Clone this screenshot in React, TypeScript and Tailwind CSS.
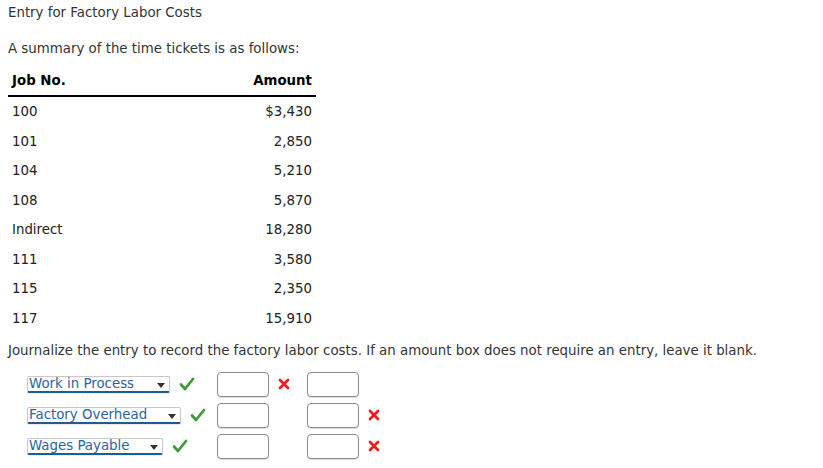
import React from 'react'

const ROWS = [
  { job: '100', amount: '$3,430' },
  { job: '101', amount: '2,850' },
  { job: '104', amount: '5,210' },
  { job: '108', amount: '5,870' },
  { job: 'Indirect', amount: '18,280' },
  { job: '111', amount: '3,580' },
  { job: '115', amount: '2,350' },
  { job: '117', amount: '15,910' },
]

const ENTRIES = [
  { account: 'Work in Process', selW: 'w-[143px]', debitX: true, creditX: false },
  { account: 'Factory Overhead', selW: 'w-[154px]', debitX: false, creditX: true },
  { account: 'Wages Payable', selW: 'w-[136px]', debitX: false, creditX: true },
]

function Check() {
  return (
    <svg width="16" height="16" viewBox="0 0 16 16" className="shrink-0">
      <path d="M2 8.5 L6 13 L14 3" fill="none" stroke="#3f9a3a" strokeWidth="2.8" strokeLinecap="round" strokeLinejoin="round" />
    </svg>
  )
}

function Cross() {
  return (
    <svg width="12" height="12" viewBox="0 0 12 12" className="shrink-0">
      <path d="M2 2 L10 10 M10 2 L2 10" stroke="#ee1c1c" strokeWidth="2.8" strokeLinecap="round" />
    </svg>
  )
}

function AccountSelect({ label, width }: { label: string; width: string }) {
  return (
    <div className={`relative flex items-center h-[17px] ${width} border border-[#c8c8c8] rounded-[2px] border-b-[2px] border-b-[#1f5c93] bg-white shadow-[0_1px_1px_rgba(0,0,0,0.08)]`}>
      <span className="leading-none text-[#2a64a0] pl-[1px] whitespace-nowrap">{label}</span>
      <svg width="8" height="5" viewBox="0 0 8 5" className="absolute right-[4px] top-[6px]">
        <path d="M0 0 L8 0 L4 5 Z" fill="#333" />
      </svg>
    </div>
  )
}

function AmountBox() {
  return <div className="w-[52px] h-[25px] border border-[#8c8c8c] rounded-[4px] bg-white shadow-[0_1px_1px_rgba(0,0,0,0.15)] shrink-0" />
}

export default function App() {
  return (
    <div className="bg-white w-[823px] h-[468px] overflow-hidden px-2 pt-[5px] text-[13.35px] text-[#333] font-['Verdana','DejaVu_Sans',sans-serif]">
      <div className="leading-[16px]">Entry for Factory Labor Costs</div>
      <div className="mt-[20px] leading-[16px]">A summary of the time tickets is as follows:</div>

      <div className="mt-[16px] w-[308px]">
        <div className="flex justify-between items-end font-bold text-black px-[4px] pb-[6px] border-b-2 border-black leading-[16px]">
          <span>Job No.</span>
          <span>Amount</span>
        </div>
        <div className="pt-[7px]">
          {ROWS.map(r => (
            <div key={r.job} className="flex justify-between px-[4px] h-[29.57px] items-start leading-[16px] text-[#222]">
              <span>{r.job}</span>
              <span>{r.amount}</span>
            </div>
          ))}
        </div>
      </div>

      <div className="mt-[2px] leading-[16px]">
        Journalize the entry to record the factory labor costs. If an amount box does not require an entry, leave it blank.
      </div>

      <div className="mt-[13px] pl-[19px] flex flex-col gap-[6px]">
        {ENTRIES.map(e => (
          <div key={e.account} className="grid grid-cols-[190px_52px_38px_52px_24px] items-center h-[25px]">
            <div className="flex items-center gap-[9px]">
              <AccountSelect label={e.account} width={e.selW} />
              <Check />
            </div>
            <AmountBox />
            <span className="flex pl-[9px]">{e.debitX && <Cross />}</span>
            <AmountBox />
            <span className="flex pl-[9px]">{e.creditX && <Cross />}</span>
          </div>
        ))}
      </div>
    </div>
  )
}
